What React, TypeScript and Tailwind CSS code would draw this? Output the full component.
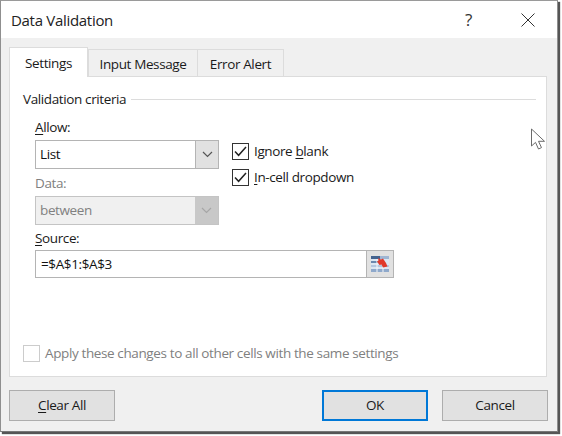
import React from "react";

const Chevron = ({ color }: { color: string }) => (
  <svg width="11" height="7" viewBox="0 0 11 7" fill="none">
    <path d="M1 1l4.5 4.5L10 1" stroke={color} strokeWidth="1.2" />
  </svg>
);

const Check = () => (
  <div className="w-[17px] h-[17px] border border-[#333333] bg-white flex items-center justify-center">
    <svg width="13" height="11" viewBox="0 0 13 11" fill="none">
      <path d="M1 5.5l3.6 3.8L12 1" stroke="#222222" strokeWidth="1.5" />
    </svg>
  </div>
);

const Cursor = () => (
  <svg className="absolute left-[530px] top-[128px]" width="18" height="24" viewBox="0 0 18 24" fill="white">
    <path d="M1.5 1v17l4-3.600 3 6.600 3-1.400-3-6.300h6z" stroke="#6b6b6b" strokeWidth="1" />
  </svg>
);

const RefIcon = () => (
  <svg width="20" height="18" viewBox="0 0 20 18">
    <rect x="1" y="1" width="18" height="16" fill="#dce6f2" />
    <rect x="1" y="1" width="9" height="3" fill="#44648f" />
    <rect x="10" y="1" width="9" height="3" fill="#9fb6d3" />
    <rect x="1" y="6" width="7" height="2" fill="#6a88ae" />
    <rect x="1" y="10" width="18" height="2" fill="#b4c7df" />
    <rect x="1" y="14" width="18" height="3" fill="#8fa9cb" />
    <path d="M7 4v13M13 4v13" stroke="#f4f7fb" strokeWidth="1" />
    <path d="M8 3l3 1.500 2-1 3 4.500 1.500 3.500-4.500 1-1.500-3-2 .5-2.500-3.500 1.500-1z" fill="#e0392b" />
  </svg>
);

const Mnemonic = ({ children }: { children: string }) => <span className="underline underline-offset-2">{children}</span>;

const Tab = ({ label, active, className }: { label: string; active?: boolean; className: string }) => (
  <div
    className={
      active
        ? `${className} h-[30px] -mb-px z-10 pt-[1px] bg-white border border-[#dcdcdc] border-b-0 flex items-center justify-center text-[#1a1a1a]`
        : `${className} h-[27px] pt-[1px] bg-[#f0f0f0] border border-[#dcdcdc] border-b-0 flex items-center justify-center text-[#1a1a1a]`
    }
  >
    {label}
  </div>
);

const Button = ({ children, className }: { children: React.ReactNode; className: string }) => (
  <div className={`${className} h-[31px] pb-[1px] bg-[#e1e1e1] flex items-center justify-center text-[#1a1a1a]`}>{children}</div>
);

export default function App() {
  return (
    <div className="relative w-[562px] h-[436px] bg-white overflow-hidden text-[13.5px] leading-[18px] text-[#1a1a1a] font-['Open_Sans',sans-serif] tracking-[-0.38px]">
      <div className="w-[558px] h-[432px] flex flex-col bg-[#f0f0f0] border border-t-[#9a9a9a] border-x-[#8f8f8f] border-b-[#777777] shadow-[2px_2px_1px_#555555]">
        <div className="h-[37px] shrink-0 bg-white flex items-center pl-[10px] pr-[22px]">
          <div className="text-[15px] text-[#222222] tracking-[-0.3px]">Data Validation</div>
          <div className="ml-auto text-[17px] text-[#333333]">?</div>
          <svg className="ml-[49px]" width="14" height="14" viewBox="0 0 14 14" fill="none">
            <path d="M0.500 0.500l13 13M13.500 0.500l-13 13" stroke="#333333" strokeWidth="1" />
          </svg>
        </div>

        <div className="flex items-end h-[38px] shrink-0 pl-[8px]">
          <Tab label="Settings" active className="w-[79px]" />
          <Tab label="Input Message" className="w-[110px]" />
          <Tab label="Error Alert" className="w-[87px] -ml-px" />
        </div>

        <div className="h-[301px] shrink-0 mx-[8px] w-[538px] bg-white border border-[#dcdcdc] flex flex-col pl-[13px] pr-[10px]">
          <div className="flex items-center gap-[5px] mt-[13px] h-[18px]">
            <span>Validation criteria</span>
            <div className="flex-1 h-px bg-[#dcdcdc]" />
          </div>

          <div className="flex mt-[8px] pl-[12px]">
            <div className="w-[184px] shrink-0">
              <div className="h-[22px] flex items-center">
                <span><Mnemonic>A</Mnemonic>llow:</span>
              </div>
              <div className="h-[29px] mt-[2px] flex bg-white border border-[#b4b4b4]">
                <div className="flex-1 pl-[4px] pb-[2px] flex items-center text-[#111111]">List</div>
                <div className="w-[23px] bg-[#e1e1e1] border-l border-[#b4b4b4] flex items-center justify-center">
                  <Chevron color="#555555" />
                </div>
              </div>
              <div className="h-[22px] mt-[3px] flex items-center text-[#808080]">Data:</div>
              <div className="h-[29px] mt-[2px] flex bg-[#f0f0f0] border border-[#c4c4c4]">
                <div className="flex-1 pl-[4px] pb-[2px] flex items-center text-[#808080]">between</div>
                <div className="w-[23px] bg-[#c8c8c8] flex items-center justify-center">
                  <Chevron color="#a6a6a6" />
                </div>
              </div>
            </div>
            <div className="ml-[13px] mt-[25px] flex flex-col gap-[6px]">
              <div className="flex items-center gap-[5px] h-[20px]">
                <Check />
                <span>Ignore <Mnemonic>b</Mnemonic>lank</span>
              </div>
              <div className="flex items-center gap-[5px] h-[20px]">
                <Check />
                <span><Mnemonic>I</Mnemonic>n-cell dropdown</span>
              </div>
            </div>
          </div>

          <div className="pl-[12px] mt-[2px]">
            <div className="h-[22px] flex items-center">
              <span><Mnemonic>S</Mnemonic>ource:</span>
            </div>
            <div className="w-[359px] h-[28px] mt-[1px] flex bg-white border border-[#b4b4b4]">
              <div className="flex-1 pl-[5px] flex items-center text-[#111111]">=$A$1:$A$3</div>
              <div className="w-[27px] bg-[#e1e1e1] border-l border-[#b4b4b4] flex items-center justify-center">
                <RefIcon />
              </div>
            </div>
          </div>

          <div className="mt-auto mb-[14px] flex items-center gap-[5px] text-[#808080]">
            <div className="w-[17px] h-[17px] border border-[#cccccc] bg-white" />
            <span>Apply these changes to all other cells with the same settings</span>
          </div>
        </div>

        <div className="flex mt-[13px] mx-[8px]">
          <Button className="w-[106px] border border-[#adadad]"><span><Mnemonic>C</Mnemonic>lear All</span></Button>
          <Button className="w-[106px] ml-[207px] border-2 border-[#0078d7]">OK</Button>
          <Button className="w-[106px] ml-[14px] border border-[#adadad]">Cancel</Button>
        </div>
      </div>
      <Cursor />
    </div>
  );
}
